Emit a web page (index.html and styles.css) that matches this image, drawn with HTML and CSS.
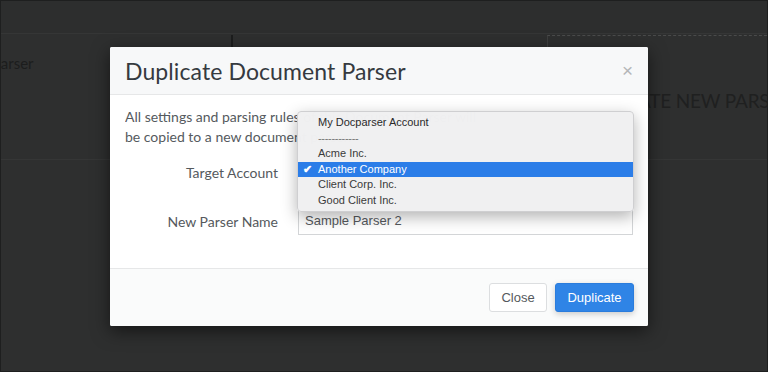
FILE: index.html
```html
<!DOCTYPE html>
<html>
<head>
<meta charset="utf-8">
<link rel="stylesheet" href="styles.css">
</head>
<body>
<div class="page">
  <div class="topbar"></div>
  <div class="content-row">
    <div class="card-left"><span class="ghost-title">Parser</span></div>
    <div class="middle"><span class="tick"></span></div>
    <div class="dropzone"><span class="dropzone-text">CREATE NEW PARSER</span></div>
  </div>
  <div class="lower"></div>
</div>

<div class="modal">
  <div class="modal-header">
    <h1 class="modal-title">Duplicate Document Parser</h1>
    <span class="close-x">&times;</span>
  </div>
  <div class="modal-body">
    <p class="intro">All settings and parsing rules of this Document Parser will<br>be copied to a new document parser.</p>
    <div class="form-grid">
      <label class="form-label">Target Account</label>
      <div class="select-box">Another Company</div>
      <label class="form-label">New Parser Name</label>
      <div class="text-input">Sample Parser 2</div>
    </div>
  </div>
  <div class="modal-footer">
    <button class="btn btn-default">Close</button>
    <button class="btn btn-primary">Duplicate</button>
  </div>

  <div class="menu">
    <div class="menu-item menu-head">My Docparser Account</div>
    <div class="menu-item menu-sep">------------</div>
    <div class="menu-item">Acme Inc.</div>
    <div class="menu-item is-selected"><span class="check">&#10004;</span>Another Company</div>
    <div class="menu-item">Client Corp. Inc.</div>
    <div class="menu-item">Good Client Inc.</div>
  </div>
</div>
</body>
</html>
```

FILE: styles.css
```css
* { box-sizing: border-box; }

html, body {
  margin: 0;
  padding: 0;
  width: 768px;
  height: 372px;
  overflow: hidden;
  background: #2e2f2f;
  font-family: Lato, "Liberation Sans", sans-serif;
}

.page {
  width: 768px;
  height: 372px;
  border: 1px solid #1e1f1f;
  display: flex;
  flex-direction: column;
  overflow: hidden;
}

.topbar {
  height: 33px;
  background: #2d2e2e;
  border-bottom: 1px solid #353636;
}

.content-row {
  height: 126px;
  display: flex;
  border-bottom: 1px solid #353636;
}

.card-left {
  width: 210px;
  overflow: hidden;
  padding-top: 20px;
}

.ghost-title {
  display: block;
  margin-left: -9px;
  font-size: 15px;
  color: #1c1d1d;
}

.middle {
  width: 336px;
  position: relative;
}

.tick {
  display: block;
  margin-left: 20px;
  width: 2px;
  height: 12px;
  margin-top: 1px;
  background: #1c1d1d;
}

.dropzone {
  flex: 1;
  margin-top: 1px;
  border-top: 1px dashed #4a4b4b;
  border-left: 1px solid #3e3f3f;
  padding-left: 55px;
  padding-top: 53px;
  white-space: nowrap;
  overflow: hidden;
}

.dropzone-text {
  font-size: 19px;
  color: #1f2020;
  letter-spacing: -0.2px;
}

.lower { flex: 1; }

/* Modal overlay */
.modal {
  position: absolute;
  left: 110px;
  top: 47px;
  width: 538px;
  background: #fff;
  border-radius: 2px;
  box-shadow: 0 5px 18px rgba(0, 0, 0, 0.55);
}

.modal-header {
  height: 48px;
  background: #f7f8f9;
  border-bottom: 1px solid #e6e7e8;
  display: flex;
  align-items: center;
  justify-content: space-between;
  padding: 0 15px;
  border-radius: 2px 2px 0 0;
}

.modal-title {
  margin: 0;
  font-weight: 400;
  font-size: 23px;
  color: #353a3f;
  letter-spacing: 0.1px;
}

.close-x {
  font-family: "Liberation Sans", sans-serif;
  font-size: 19px;
  color: #b4b6b8;
  margin-right: 0;
}

.modal-body {
  height: 173px;
  padding: 12px 15px 0 15px;
}

.intro {
  margin: 0;
  font-size: 14px;
  line-height: 20px;
  color: #555a5e;
  white-space: nowrap;
  overflow: hidden;
}

.form-grid {
  margin-top: 11px;
  display: grid;
  grid-template-columns: 153px 1fr;
  column-gap: 20px;
  row-gap: 21px;
  align-items: center;
}

.form-label {
  text-align: right;
  font-size: 14px;
  color: #55595d;
}

.select-box,
.text-input {
  height: 28px;
  border: 1px solid #d3d5d7;
  padding-left: 6px;
  font-family: "Liberation Sans", Arial, sans-serif;
  font-size: 13px;
  line-height: 26px;
  color: #55595d;
  background: #fff;
}

.modal-footer {
  height: 58px;
  border-top: 1px solid #e6e7e8;
  background: #fafbfb;
  display: flex;
  justify-content: flex-end;
  align-items: flex-start;
  gap: 8px;
  padding: 14px 14px 0 0;
  border-radius: 0 0 2px 2px;
}

.btn {
  height: 29px;
  font-family: "Liberation Sans", Arial, sans-serif;
  font-size: 13px;
  border-radius: 3px;
  padding: 0;
  cursor: pointer;
}

.btn-default {
  width: 58px;
  background: #fff;
  border: 1px solid #dcdee0;
  color: #55595d;
}

.btn-primary {
  width: 79px;
  background: #2f84e6;
  border: 1px solid #2a7cdc;
  color: #fff;
  box-shadow: 0 2px 6px rgba(0, 0, 0, 0.2);
}

/* Native select dropdown (over content) */
.menu {
  position: absolute;
  left: 187px;
  top: 64px;
  width: 337px;
  height: 101px;
  padding-top: 3px;
  background: rgba(240, 240, 241, 0.99);
  border: 1px solid #cfcfd1;
  border-radius: 4px;
  box-shadow: 0 5px 16px rgba(0, 0, 0, 0.3);
  font-family: "Liberation Sans", Arial, sans-serif;
  font-size: 11px;
}

.menu-item {
  position: relative;
  height: 15.6px;
  line-height: 15.6px;
  padding-left: 20px;
  color: #3a3a3a;
}

.menu-head { color: #2a2a2a; }

.menu-sep { color: #777; letter-spacing: -0.3px; }

.menu-item.is-selected {
  background: #2b7de8;
  color: #fff;
}

.check {
  position: absolute;
  left: 5px;
  top: 0;
  font-size: 11px;
  font-weight: 700;
}
```
